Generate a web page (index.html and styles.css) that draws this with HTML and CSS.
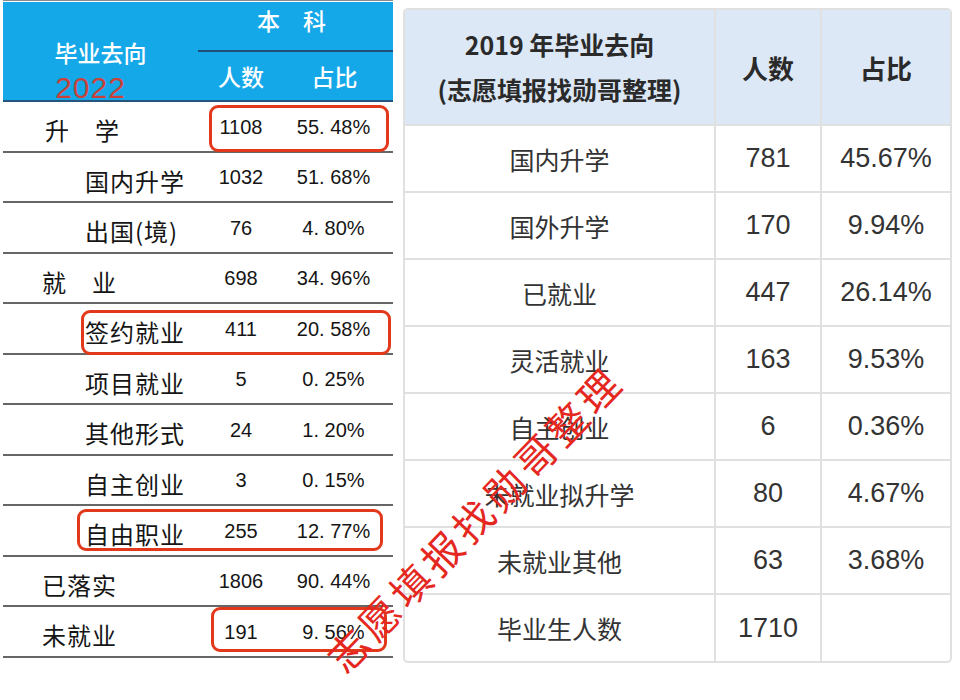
FILE: index.html
```html
<!DOCTYPE html>
<html lang="zh-CN">
<head>
<meta charset="utf-8">
<title>毕业去向</title>
<link rel="stylesheet" href="styles.css">
</head>
<body>
<div class="page">
  <div class="ltable">
    <div class="lhead">
      <div class="lh-title"><span class="lh-name">毕业去向</span><span class="year">2022</span></div>
      <div class="lh-group">本　科</div>
      <div class="lh-cols">
        <span class="lh-col">人数</span>
        <span class="lh-col lh-pct">占比</span>
      </div>
    </div>
    <div class="lrow"><span class="lab l1">升　学</span><span class="num">1108</span><span class="pct">55. 48%</span></div>
    <div class="lrow"><span class="lab l2">国内升学</span><span class="num">1032</span><span class="pct">51. 68%</span></div>
    <div class="lrow"><span class="lab l2">出国(境)</span><span class="num">76</span><span class="pct">4. 80%</span></div>
    <div class="lrow"><span class="lab l1 l1b">就　业</span><span class="num">698</span><span class="pct">34. 96%</span></div>
    <div class="lrow"><span class="lab l2">签约就业</span><span class="num">411</span><span class="pct">20. 58%</span></div>
    <div class="lrow"><span class="lab l2">项目就业</span><span class="num">5</span><span class="pct">0. 25%</span></div>
    <div class="lrow"><span class="lab l2">其他形式</span><span class="num">24</span><span class="pct">1. 20%</span></div>
    <div class="lrow"><span class="lab l2">自主创业</span><span class="num">3</span><span class="pct">0. 15%</span></div>
    <div class="lrow"><span class="lab l2">自由职业</span><span class="num">255</span><span class="pct">12. 77%</span></div>
    <div class="lrow"><span class="lab l1 l1b">已落实</span><span class="num">1806</span><span class="pct">90. 44%</span></div>
    <div class="lrow"><span class="lab l1 l1b">未就业</span><span class="num">191</span><span class="pct">9. 56%</span></div>
    <div class="mark mark-1"></div>
    <div class="mark mark-2"></div>
    <div class="mark mark-3"></div>
    <div class="mark mark-4"></div>
  </div>

  <div class="rtable">
    <table>
      <thead>
        <tr>
          <th class="c1">2019 年毕业去向<br>(志愿填报找勋哥整理)</th>
          <th class="c2">人数</th>
          <th class="c3">占比</th>
        </tr>
      </thead>
      <tbody>
        <tr><td class="c1">国内升学</td><td class="c2 n">781</td><td class="c3 n">45.67%</td></tr>
        <tr><td class="c1">国外升学</td><td class="c2 n">170</td><td class="c3 n">9.94%</td></tr>
        <tr><td class="c1">已就业</td><td class="c2 n">447</td><td class="c3 n">26.14%</td></tr>
        <tr><td class="c1">灵活就业</td><td class="c2 n">163</td><td class="c3 n">9.53%</td></tr>
        <tr><td class="c1">自主创业</td><td class="c2 n">6</td><td class="c3 n">0.36%</td></tr>
        <tr><td class="c1">未就业拟升学</td><td class="c2 n">80</td><td class="c3 n">4.67%</td></tr>
        <tr><td class="c1">未就业其他</td><td class="c2 n">63</td><td class="c3 n">3.68%</td></tr>
        <tr class="last"><td class="c1">毕业生人数</td><td class="c2 n">1710</td><td class="c3 n"></td></tr>
      </tbody>
    </table>
  </div>
</div>
<div class="watermark">志愿填报找勋哥整理</div>
</body>
</html>
```

FILE: styles.css
```css
html, body {
  margin: 0;
  padding: 0;
  background: #ffffff;
}
body {
  position: relative;
  width: 960px;
  height: 700px;
  overflow: hidden;
  font-family: "Noto Sans CJK SC", "Liberation Sans", sans-serif;
}
.page {
  display: flex;
  align-items: flex-start;
  gap: 10px;
  padding-left: 3px;
}

/* ---------- left table ---------- */
.ltable {
  position: relative;
  width: 390px;
  border-top: 1px solid #8a8a8a;
}
.lhead {
  display: grid;
  grid-template-columns: 195px 195px;
  grid-template-rows: 50px 48px;
  margin-top: 1px;
  background: #15a8e9;
  border-bottom: 2px solid #24557e;
  color: #ffffff;
}
.lh-title {
  grid-row: 1 / 3;
  grid-column: 1;
  display: flex;
  flex-direction: column;
  align-items: center;
  padding-top: 36px;
  box-sizing: border-box;
}
.lh-name {
  font-size: 23px;
  line-height: 28px;
  font-weight: 500;
}
.year {
  font-family: "Liberation Sans", sans-serif;
  font-size: 30px;
  line-height: 28px;
  margin-top: 8px;
  color: #c9423a;
  letter-spacing: 1px;
  padding-right: 20px;
}
.lh-group {
  grid-column: 2;
  grid-row: 1;
  border-bottom: 2px solid #1e4f78;
  font-size: 23px;
  line-height: 30px;
  font-weight: 500;
  text-align: center;
  padding: 3px 8px 0 0;
  box-sizing: border-box;
}
.lh-cols {
  grid-column: 2;
  grid-row: 2;
  display: grid;
  grid-template-columns: 86px 109px;
  align-items: center;
}
.lh-col {
  font-size: 23px;
  font-weight: 500;
  line-height: 48px;
  text-align: center;
}
.lh-pct {
  padding-right: 8px;
}

.lrow {
  display: grid;
  grid-template-columns: 195px 86px 109px;
  align-items: center;
  height: 50.5px;
  border-bottom: 2px solid #666666;
  box-sizing: border-box;
  color: #151515;
}
.lab {
  font-size: 24px;
  letter-spacing: 1px;
  padding-top: 8px;
  line-height: 30px;
  white-space: nowrap;
}
.l1 { padding-left: 42px; }
.l1b { padding-left: 39px; }
.l2 { padding-left: 82px; }
.num, .pct {
  font-family: "Liberation Sans", sans-serif;
  font-size: 20px;
  text-align: center;
  padding-top: 2px;
  white-space: pre;
}
.pct { padding-right: 10px; }

.mark {
  position: absolute;
  border: 3px solid #e2391c;
  border-radius: 9px;
  box-sizing: border-box;
}
.mark-1 { left: 206px; top: 104px; width: 180px; height: 47px; }
.mark-2 { left: 78px;  top: 309px; width: 310px; height: 45px; }
.mark-3 { left: 74px;  top: 508px; width: 306px; height: 42px; }
.mark-4 { left: 208px; top: 606px; width: 176px; height: 45px; }

/* ---------- right table ---------- */
.rtable {
  margin-top: 8px;
  width: 549px;
  border: 2px solid #e0e0e0;
  border-radius: 5px;
  overflow: hidden;
  box-sizing: border-box;
}
.rtable table {
  width: 100%;
  border-collapse: collapse;
  table-layout: fixed;
  color: #333333;
}
.rtable .c1 { width: 309px; }
.rtable .c2 { width: 104px; }
.rtable th,
.rtable td {
  border-right: 2px solid #e0e0e0;
  border-bottom: 2px solid #e0e0e0;
  text-align: center;
  padding: 0;
}
.rtable th.c3,
.rtable td.c3 { border-right: none; }
.rtable tr.last td { border-bottom: none; }
.rtable thead tr {
  height: 115px;
  background: #dce8f5;
}
.rtable th {
  font-size: 25px;
  font-weight: 700;
  line-height: 45px;
  color: #2a2a2a;
}
.rtable th.c2,
.rtable th.c3 { font-size: 26px; }
.rtable tbody tr { height: 67px; }
.rtable td {
  font-size: 25px;
}
.rtable td.n {
  font-family: "Liberation Sans", sans-serif;
  font-size: 27px;
}

/* ---------- watermark ---------- */
.watermark {
  position: absolute;
  left: 268px;
  top: 497px;
  width: 404px;
  height: 50px;
  line-height: 50px;
  text-align: center;
  font-size: 40px;
  letter-spacing: 5px;
  text-indent: 5px;
  color: #e5281f;
  transform: rotate(-46deg);
  transform-origin: center center;
  white-space: nowrap;
  pointer-events: none;
}
```
